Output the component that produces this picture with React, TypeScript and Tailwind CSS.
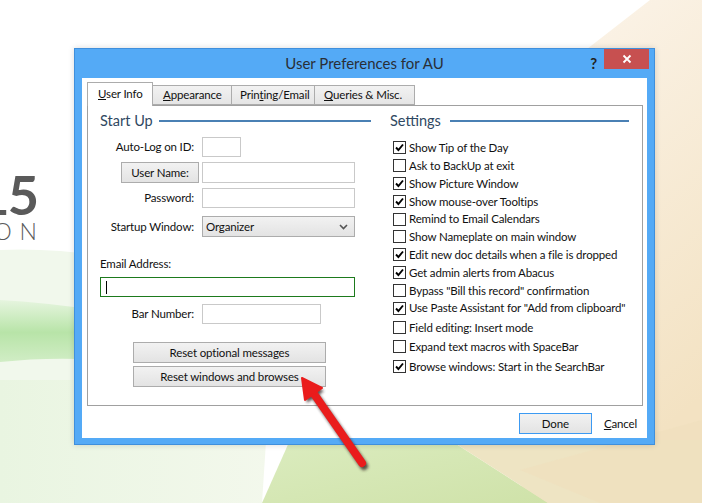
import React from "react";

const settings: [string, boolean][] = [
  ["Show Tip of the Day", true],
  ["Ask to BackUp at exit", false],
  ["Show Picture Window", true],
  ["Show mouse-over Tooltips", true],
  ["Remind to Email Calendars", false],
  ["Show Nameplate on main window", false],
  ["Edit new doc details when a file is dropped", true],
  ["Get admin alerts from Abacus", true],
  ['Bypass "Bill this record" confirmation', false],
  ['Use Paste Assistant for "Add from clipboard"', true],
  ["Field editing: Insert mode", false],
  ["Expand text macros with SpaceBar", false],
  ["Browse windows: Start in the SearchBar", true],
];

function Wallpaper() {
  return (
    <svg className="absolute inset-0" width="702" height="503" viewBox="0 0 702 503">
      <defs>
        <linearGradient id="peach" x1="0" y1="0" x2="0.3" y2="1">
          <stop offset="0" stopColor="#fcf5ec" />
          <stop offset="1" stopColor="#f3e2c2" />
        </linearGradient>
        <linearGradient id="band" x1="0" y1="0" x2="0" y2="1">
          <stop offset="0" stopColor="#e6f5df" />
          <stop offset="0.45" stopColor="#b8e4a8" />
          <stop offset="1" stopColor="#d9f0cf" />
        </linearGradient>
        <linearGradient id="paleleft" x1="0" y1="0" x2="1" y2="0">
          <stop offset="0" stopColor="#e9f5e1" />
          <stop offset="1" stopColor="#f3f8ec" />
        </linearGradient>
        <linearGradient id="green" x1="0" y1="0" x2="1" y2="1">
          <stop offset="0" stopColor="#dbecbf" />
          <stop offset="1" stopColor="#cfe2a9" />
        </linearGradient>
      </defs>
      <rect width="702" height="503" fill="#ffffff" />
      <path d="M650 0 L702 0 L702 503 L520 503 L560 70 Z" fill="url(#peach)" />
      <path d="M0 250 Q120 245 260 300 L260 503 L0 503 Z" fill="#f1f8ec" />
      <path d="M0 300 Q90 305 200 330 L200 372 Q90 352 0 362 Z" fill="url(#band)" />
      <path d="M0 380 L270 380 L262 503 L0 503 Z" fill="url(#paleleft)" />
      <path d="M290 440 L450 440 L548 503 L262 503 Z" fill="url(#green)" />
      <path d="M450 440 L702 440 L702 503 L548 503 Z" fill="#eee4c3" />
      <path d="M520 470 L702 420 L702 503 L600 503 Z" fill="#efe0bd" opacity="0.7" />
    </svg>
  );
}

function Arrow() {
  return (
    <svg className="absolute inset-0 pointer-events-none" width="702" height="503" viewBox="0 0 702 503">
      <defs>
        <filter id="sh" x="-20%" y="-20%" width="140%" height="140%">
          <feGaussianBlur stdDeviation="1.6" />
        </filter>
      </defs>
      <g transform="translate(2 3)" filter="url(#sh)" opacity="0.75">
        <line x1="362" y1="463" x2="312" y2="391" stroke="#2a1a1a" strokeWidth="8" strokeLinecap="round" />
        <polygon points="302,378 322,388 305,400" fill="#2a1a1a" />
      </g>
      <line x1="362" y1="463" x2="312" y2="391" stroke="#ea1c1c" strokeWidth="8" strokeLinecap="round" />
      <polygon points="302,378 322,388 305,400" fill="#ea1c1c" stroke="#ea1c1c" strokeWidth="2" strokeLinejoin="round" />
    </svg>
  );
}

function Check({ on }: { on: boolean }) {
  return (
    <span className="flex h-[13px] w-[13px] shrink-0 items-center justify-center border border-[#333333] bg-white">
      {on && (
        <svg width="9" height="9" viewBox="0 0 9 9">
          <path d="M1 4.5 L3.4 7 L8 1.5" fill="none" stroke="#000" strokeWidth="1.9" />
        </svg>
      )}
    </span>
  );
}

const btn =
  "flex items-center justify-center border border-[#acacac] bg-gradient-to-b from-[#f2f2f2] to-[#e3e3e3] text-[#111]";

export default function App() {
  return (
    <div className="relative h-[503px] w-[702px] overflow-hidden bg-white font-['Lato','Open_Sans',sans-serif] text-[11.5px] tracking-[-0.15px] text-[#111]">
      <Wallpaper />

      {/* logo fragment behind the dialog */}
      <div className="absolute right-[665px] top-[173px] flex flex-col items-end text-[#5a5a5a]">
        <span className="text-[54px] font-bold leading-[44px] tracking-[-2px]">2015</span>
        <span className="mr-[-8px] mt-[4px] text-[23px] font-light leading-[20px] tracking-[8px]">EDITION</span>
      </div>

      {/* Dialog window */}
      <div className="absolute left-[74px] top-[48px] flex h-[397px] w-[581px] flex-col border border-[#3f8fdc] bg-[#54aaf6] px-[7px] pb-[6px] shadow-[0_0_6px_rgba(0,0,0,0.15)]">
        <div className="relative -mx-[7px] flex h-[29px] shrink-0 items-center justify-center">
          <span className="text-[15px] tracking-normal text-[#2a2f36]">User Preferences for AU</span>
          <span className="absolute right-[57px] top-[3px] text-[15px] font-bold text-[#222]">?</span>
          <div className="absolute right-[5px] top-0 flex h-[20px] w-[45px] items-center justify-center bg-[#c75050]">
            <svg width="10" height="10" viewBox="0 0 10 10">
              <path d="M1.5 1.5 L8.5 8.5 M8.5 1.5 L1.5 8.5" stroke="#fff" strokeWidth="1.8" />
            </svg>
          </div>
        </div>

        <div className="flex flex-1 flex-col bg-white pl-[5px] pt-[4px]">
          {/* Tabs */}
          <div className="relative z-10 flex h-[23px] items-end whitespace-nowrap">
            <div className="-mb-px flex h-[24px] w-[66px] shrink-0 items-center border border-b-0 border-[#acacac] bg-white pb-[2px] pl-[10px]">
              <span><span className="underline">U</span>ser Info</span>
            </div>
            <div className="flex h-[20px] w-[79px] shrink-0 items-center border border-l-0 border-[#acacac] bg-gradient-to-b from-[#f2f2f2] to-[#e5e5e5] pl-[10px]">
              <span><span className="underline">A</span>ppearance</span>
            </div>
            <div className="flex h-[20px] w-[83px] shrink-0 items-center border border-l-0 border-[#acacac] bg-gradient-to-b from-[#f2f2f2] to-[#e5e5e5] pl-[8px]">
              <span>Prin<span className="underline">t</span>ing/Email</span>
            </div>
            <div className="flex h-[20px] w-[100px] shrink-0 items-center border border-l-0 border-[#acacac] bg-gradient-to-b from-[#f2f2f2] to-[#e5e5e5] pl-[9px]">
              <span><span className="underline">Q</span>ueries &amp; Misc.</span>
            </div>
          </div>

          {/* Panel */}
          <div className="flex h-[301px] w-[556px] border border-[#a0a0a0]">
            {/* Start Up column */}
            <div className="flex w-[283px] shrink-0 flex-col pl-[12px]">
              <div className="mt-[7px] flex h-[16px] items-center">
                <span className="text-[14.5px] leading-none tracking-normal text-[#2f4862]">Start Up</span>
                <div className="ml-[6px] h-[2px] flex-1 bg-[#4a80b4]" />
              </div>

              <div className="mt-[8px] flex h-[20px] items-center">
                <span className="w-[94px] text-right">Auto-Log on ID:</span>
                <div className="ml-[8px] h-[20px] w-[39px] border border-[#c9c9c9]" />
              </div>
              <div className="mt-[5px] flex h-[21px] items-center">
                <div className="flex w-[99px] justify-end">
                  <div className={`${btn} h-[21px] w-[78px]`}>User Name:</div>
                </div>
                <div className="ml-[3px] h-[21px] w-[153px] border border-[#c9c9c9]" />
              </div>
              <div className="mt-[5px] flex h-[20px] items-center">
                <span className="w-[94px] text-right">Password:</span>
                <div className="ml-[8px] h-[20px] w-[153px] border border-[#c9c9c9]" />
              </div>
              <div className="mt-[8px] flex h-[21px] items-center">
                <span className="w-[94px] text-right">Startup Window:</span>
                <div className="ml-[8px] flex h-[21px] w-[153px] items-center justify-between border border-[#acacac] bg-gradient-to-b from-[#f2f2f2] to-[#e3e3e3] pl-[3px] pr-[6px]">
                  <span>Organizer</span>
                  <svg width="9" height="6" viewBox="0 0 9 6">
                    <path d="M1 1 L4.5 4.5 L8 1" fill="none" stroke="#555" strokeWidth="1.6" />
                  </svg>
                </div>
              </div>

              <div className="mt-[19px] flex h-[16px] items-center">Email Address:</div>
              <div className="mt-[5px] flex h-[20px] w-[255px] items-center border border-[#1d7a1d] pl-[5px]">
                <div className="h-[13px] w-px bg-black" />
              </div>
              <div className="mt-[7px] flex h-[20px] items-center">
                <span className="w-[94px] text-right">Bar Number:</span>
                <div className="ml-[8px] h-[20px] w-[119px] border border-[#c9c9c9]" />
              </div>

              <div className={`${btn} ml-[33px] mt-[18px] h-[21px] w-[193px]`}>Reset optional messages</div>
              <div className={`${btn} ml-[33px] mt-[3px] h-[21px] w-[193px]`}>Reset windows and browses</div>
            </div>

            {/* Settings column */}
            <div className="flex min-w-0 flex-1 flex-col pl-[19px] pr-[13px]">
              <div className="mt-[7px] flex h-[16px] items-center">
                <span className="text-[14.5px] leading-none tracking-normal text-[#2f4862]">Settings</span>
                <div className="ml-[9px] h-[2px] flex-1 bg-[#4a80b4]" />
              </div>
              <div className="ml-[3px] mt-[10px] flex flex-col">
                {settings.map(([label, on], i) => (
                  <div
                    key={label}
                    className={`flex h-[17.8px] items-center gap-[3px] ${i === 10 ? "mt-[2px]" : ""} ${i === 11 ? "mt-[1px]" : ""} ${i === 12 ? "mt-[2px]" : ""}`}
                  >
                    <Check on={on} />
                    <span className="whitespace-nowrap">{label}</span>
                  </div>
                ))}
              </div>
            </div>
          </div>

          {/* Footer buttons */}
          <div className="mt-[7px] flex h-[21px] items-center justify-end pr-[10px]">
            <div className="flex h-[21px] w-[73px] items-center justify-center border border-[#3c9af2] bg-gradient-to-b from-[#f2f2f2] to-[#e3e3e3]">
              Done
            </div>
            <span className="ml-[12px]"><span className="underline">C</span>ancel</span>
          </div>
        </div>
      </div>

      <Arrow />
    </div>
  );
}
